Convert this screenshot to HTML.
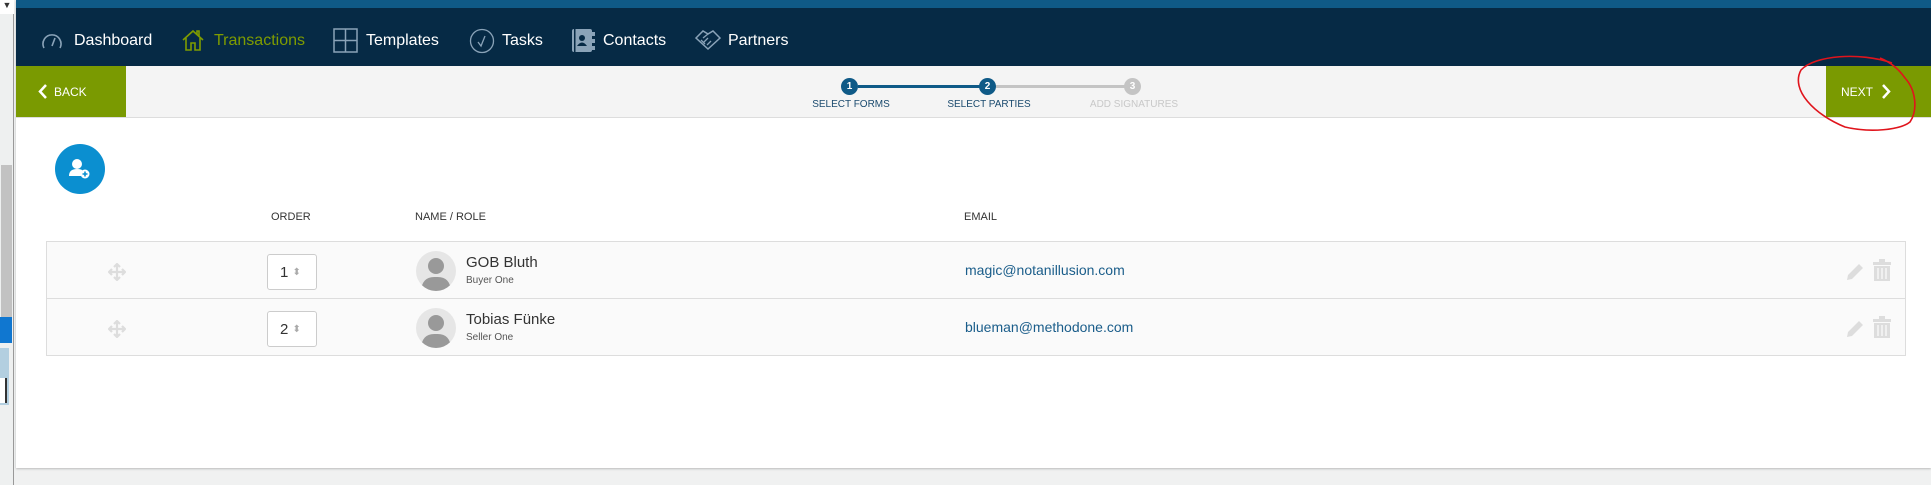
<!DOCTYPE html>
<html><head><meta charset="utf-8"><style>
*{margin:0;padding:0;box-sizing:border-box}
body{width:1931px;height:485px;overflow:hidden;background:#f0f1f1;font-family:"Liberation Sans",sans-serif;position:relative}
.a{position:absolute}
.nav span{position:absolute;top:32px;font-size:16px;color:#fff}
.step{position:absolute;top:78px;width:17px;height:17px;border-radius:50%;color:#fff;font-size:10px;font-weight:bold;text-align:center;line-height:17px}
.sl{position:absolute;top:99px;font-size:10px;white-space:nowrap;transform:translateX(-50%)}
.th{position:absolute;top:211px;font-size:11px;color:#333}
.row{position:absolute;left:46px;width:1860px;height:58px;background:#fafafa;border:1px solid #ddd}
.box{position:absolute;left:220px;top:12px;width:50px;height:36px;border:1px solid #ccc;border-radius:3px;background:#fff;font-size:15px;color:#333;padding:9px 0 0 12px}
.av{position:absolute;left:369px;top:9px;width:40px;height:40px;border-radius:50%;background:#e6e6e6;overflow:hidden}
.nm{position:absolute;left:419px;top:12px;font-size:15px;color:#333}
.rl{position:absolute;left:419px;top:33px;font-size:10px;color:#555}
.em{position:absolute;left:918px;top:20px;font-size:14px;color:#1a5d8a}
</style></head><body>
<div class="a" style="left:0;top:0;width:14px;height:485px;background:#eef0f0;border-right:1px solid #999"></div>
<div class="a" style="left:0;top:0;width:14px;height:14px;background:#fff;font-size:9px;color:#333;text-align:center">▼</div>
<div class="a" style="left:1px;top:165px;width:11px;height:152px;background:#c2c2c2"></div>
<div class="a" style="left:0;top:317px;width:12px;height:26px;background:#1077d0"></div>
<div class="a" style="left:0;top:348px;width:9px;height:57px;background:#b3cfe0"></div>
<div class="a" style="left:0;top:378px;width:7px;height:25px;background:#fff;border-right:2px solid #333"></div>
<div class="a" style="left:16px;top:0;width:1915px;height:468px;background:#fff;box-shadow:0 1px 2px #bbb"></div>
<div class="a" style="left:16px;top:0;width:1915px;height:8px;background:#0f5a87"></div>
<div class="a" style="left:16px;top:8px;width:1915px;height:58px;background:#062a45"></div>
<div class="nav">
<svg class="a" style="left:41px;top:31px" width="22" height="20" viewBox="0 0 22 20"><path d="M3 17A9 9 0 1 1 19 17" fill="none" stroke="#8aa3b8" stroke-width="1.6"/><path d="M11 15L14 7" stroke="#8aa3b8" stroke-width="1.6"/></svg>
<span style="left:74px">Dashboard</span>
<svg class="a" style="left:181px;top:28px" width="24" height="24" viewBox="0 0 24 24"><path d="M2 12L12 3L22 12M5 10V22H10V15H14V22H19V10M16 6V3H18V8" fill="none" stroke="#7f9c00" stroke-width="1.6"/></svg>
<span style="left:214px;color:#7f9c00">Transactions</span>
<svg class="a" style="left:333px;top:28px" width="25" height="25" viewBox="0 0 25 25"><rect x="1" y="1" width="23" height="23" fill="none" stroke="#8aa3b8" stroke-width="1.5"/><path d="M12.5 1V24M1 12.5H24" stroke="#8aa3b8" stroke-width="1.5"/></svg>
<span style="left:366px">Templates</span>
<svg class="a" style="left:469px;top:28px" width="26" height="26" viewBox="0 0 26 26"><circle cx="13" cy="13" r="11.5" fill="none" stroke="#8aa3b8" stroke-width="1.3"/><path d="M9 14L12 18L16 8" fill="none" stroke="#8aa3b8" stroke-width="1.3"/></svg>
<span style="left:502px">Tasks</span>
<svg class="a" style="left:571px;top:28px" width="24" height="25" viewBox="0 0 24 25"><rect x="1" y="1" width="20" height="23" rx="2" fill="#8aa3b8"/><rect x="21" y="4" width="3" height="4" fill="#8aa3b8"/><rect x="21" y="11" width="3" height="4" fill="#8aa3b8"/><rect x="21" y="18" width="3" height="4" fill="#8aa3b8"/><circle cx="11" cy="10" r="3" fill="#062a45"/><path d="M6 18Q11 11 16 18Z" fill="#062a45"/><rect x="3" y="1" width="1.5" height="23" fill="#062a45"/></svg>
<span style="left:603px">Contacts</span>
<svg class="a" style="left:695px;top:29px" width="26" height="22" viewBox="0 0 26 22"><path d="M1 9L8 2L13 5L18 2L25 9L13 20Z" fill="none" stroke="#8aa3b8" stroke-width="1.5"/><path d="M8 9L13 5M9 13L13 9M12 16L16 12M6 11L10 15" stroke="#8aa3b8" stroke-width="1.3"/></svg>
<span style="left:728px">Partners</span>
</div>
<div class="a" style="left:16px;top:66px;width:1915px;height:52px;background:#f4f4f4;border-bottom:1px solid #ddd"></div>
<div class="a" style="left:16px;top:66px;width:110px;height:51px;background:#7a9a01;color:#fff;font-size:12px"><svg class="a" style="left:22px;top:18px" width="10" height="15" viewBox="0 0 10 15"><path d="M8 1L2 7.5L8 14" fill="none" stroke="#fff" stroke-width="2.5"/></svg><span class="a" style="left:38px;top:19px">BACK</span></div>
<div class="a" style="left:1826px;top:66px;width:105px;height:51px;background:#7a9a01;color:#fff;font-size:12px"><span class="a" style="left:15px;top:19px">NEXT</span><svg class="a" style="left:55px;top:18px" width="10" height="15" viewBox="0 0 10 15"><path d="M2 1L8 7.5L2 14" fill="none" stroke="#fff" stroke-width="2.5"/></svg></div>
<div class="a" style="left:858px;top:85px;width:130px;height:3px;background:#0f5a87"></div>
<div class="a" style="left:996px;top:85px;width:137px;height:3px;background:#c4c4c4"></div>
<div class="step" style="left:841px;background:#0f5a87">1</div>
<div class="step" style="left:979px;background:#0f5a87">2</div>
<div class="step" style="left:1124px;background:#c4c4c4">3</div>
<div class="sl" style="left:851px;color:#1a4a6e">SELECT FORMS</div>
<div class="sl" style="left:989px;color:#1a4a6e">SELECT PARTIES</div>
<div class="sl" style="left:1134px;color:#c8c8c8">ADD SIGNATURES</div>
<div class="a" style="left:55px;top:144px;width:50px;height:50px;border-radius:50%;background:#0b8fd0"></div>
<svg class="a" style="left:66px;top:157px" width="26" height="24" viewBox="0 0 26 24"><circle cx="11" cy="7" r="5" fill="#fff"/><path d="M3 19Q3 12 11 12Q16 12 17 14L15 19Z" fill="#fff"/><circle cx="19" cy="17" r="4.5" fill="#fff"/><path d="M19 14.5V19.5M16.5 17H21.5" stroke="#0b8fd0" stroke-width="1.6"/></svg>
<div class="th" style="left:271px">ORDER</div>
<div class="th" style="left:415px">NAME / ROLE</div>
<div class="th" style="left:964px">EMAIL</div>
<div class="row" style="top:241px">
<svg class="a" style="left:61px;top:21px" width="18" height="18" viewBox="0 0 18 18"><path d="M9 1V17M1 9H17M6 4L9 1L12 4M6 14L9 17L12 14M4 6L1 9L4 12M14 6L17 9L14 12" fill="none" stroke="#ddd" stroke-width="2.2"/></svg>
<div class="box">1 <span style="color:#aaa;font-size:10px;position:relative;top:-2px">⬍</span></div>
<div class="av"><svg width="40" height="40"><circle cx="20" cy="15" r="8" fill="#999"/><path d="M5 40Q6 25 20 26Q34 25 35 40Z" fill="#999"/></svg></div>
<div class="nm">GOB Bluth</div><div class="rl">Buyer One</div>
<div class="em">magic@notanillusion.com</div>
<svg class="a" style="left:1798px;top:20px" width="20" height="20" viewBox="0 0 20 20"><path d="M2 18L3 13L14 2L18 6L7 17Z" fill="#ddd"/></svg>
<svg class="a" style="left:1825px;top:17px" width="20" height="23" viewBox="0 0 20 23"><rect x="1" y="3" width="18" height="3" fill="#ddd"/><rect x="7" y="0" width="6" height="3" fill="#ddd"/><path d="M2 7H18V22H2Z" fill="#ddd"/><path d="M6 9V20M10 9V20M14 9V20" stroke="#fafafa" stroke-width="1.3"/></svg>
</div>
<div class="row" style="top:298px">
<svg class="a" style="left:61px;top:21px" width="18" height="18" viewBox="0 0 18 18"><path d="M9 1V17M1 9H17M6 4L9 1L12 4M6 14L9 17L12 14M4 6L1 9L4 12M14 6L17 9L14 12" fill="none" stroke="#ddd" stroke-width="2.2"/></svg>
<div class="box">2 <span style="color:#aaa;font-size:10px;position:relative;top:-2px">⬍</span></div>
<div class="av"><svg width="40" height="40"><circle cx="20" cy="15" r="8" fill="#999"/><path d="M5 40Q6 25 20 26Q34 25 35 40Z" fill="#999"/></svg></div>
<div class="nm">Tobias Fünke</div><div class="rl">Seller One</div>
<div class="em">blueman@methodone.com</div>
<svg class="a" style="left:1798px;top:20px" width="20" height="20" viewBox="0 0 20 20"><path d="M2 18L3 13L14 2L18 6L7 17Z" fill="#ddd"/></svg>
<svg class="a" style="left:1825px;top:17px" width="20" height="23" viewBox="0 0 20 23"><rect x="1" y="3" width="18" height="3" fill="#ddd"/><rect x="7" y="0" width="6" height="3" fill="#ddd"/><path d="M2 7H18V22H2Z" fill="#ddd"/><path d="M6 9V20M10 9V20M14 9V20" stroke="#fafafa" stroke-width="1.3"/></svg>
</div>
<svg class="a" style="left:0;top:0" width="1931" height="485"><path d="M1892 63C1860 52 1815 55 1801 70C1790 90 1815 115 1845 127C1870 133 1900 130 1910 122C1918 110 1916 90 1905 78C1898 68 1890 62 1880 58" fill="none" stroke="#e0141c" stroke-width="1.6"/></svg>
</body></html>
